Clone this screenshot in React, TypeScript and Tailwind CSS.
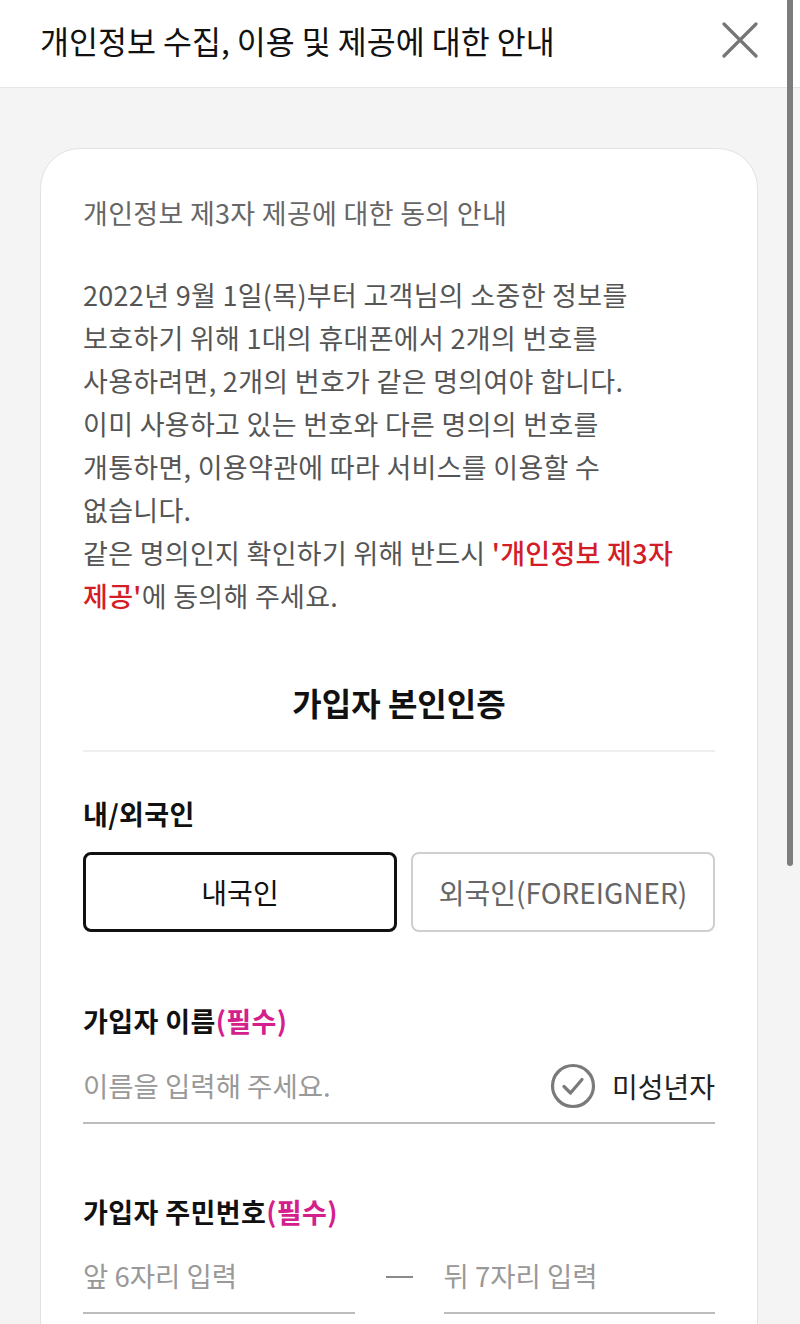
import React from "react";

const font = { fontFamily: '"Noto Sans CJK KR", "Noto Sans", sans-serif' };

const CloseIcon = () => (
  <svg width="36" height="36" viewBox="0 0 36 36" fill="none">
    <path d="M2 2L34 34M34 2L2 34" stroke="#767676" strokeWidth="3.2" strokeLinecap="round" />
  </svg>
);

const CheckCircle = () => (
  <svg width="46" height="46" viewBox="0 0 46 46" fill="none">
    <circle cx="23" cy="23" r="20.5" stroke="#7a7a7a" strokeWidth="3.2" />
    <path d="M14 23.5L20.5 30L32 16.5" stroke="#7a7a7a" strokeWidth="3.2" strokeLinecap="round" strokeLinejoin="round" />
  </svg>
);

const Label = ({ text, required }: { text: string; required?: boolean }) => (
  <p className="text-[27px] leading-[36px] tracking-[0.4px] font-bold text-[#111]">
    {text}
    {required && <span className="text-[#d4208c]">(필수)</span>}
  </p>
);

export default function App() {
  return (
    <div style={font} className="relative min-h-[1324px] bg-[#f4f4f4] overflow-hidden">
      {/* Header */}
      <header className="flex h-[88px] items-center justify-between border-b border-[#e6e6e6] bg-white pl-[40px] pr-[40px] pb-[8px]">
        <h1 className="text-[31.5px] leading-[40px] font-normal text-[#111]">개인정보 수집, 이용 및 제공에 대한 안내</h1>
        <button className="flex h-[40px] w-[40px] items-center justify-center">
          <CloseIcon />
        </button>
      </header>

      {/* Card */}
      <main className="ml-[40px] mr-[42px] mt-[60px] rounded-t-[40px] border border-[#e2e2e2] bg-white px-[42px] pt-[42px] pb-[40px]">
        <p className="text-[27px] leading-[43px] tracking-[0.3px] text-[#666]">개인정보 제3자 제공에 대한 동의 안내</p>

        <p className="mt-[39px] text-[27px] leading-[43px] tracking-[0.3px] text-[#555]">
          2022년 9월 1일(목)부터 고객님의 소중한 정보를
          <br />
          보호하기 위해 1대의 휴대폰에서 2개의 번호를
          <br />
          사용하려면, 2개의 번호가 같은 명의여야 합니다.
          <br />
          이미 사용하고 있는 번호와 다른 명의의 번호를
          <br />
          개통하면, 이용약관에 따라 서비스를 이용할 수
          <br />
          없습니다.
          <br />
          같은 명의인지 확인하기 위해 반드시 <span className="font-medium text-[#d31d27]">'개인정보 제3자</span>
          <br />
          <span className="font-medium text-[#d31d27]">제공'</span>에 동의해 주세요.
        </p>

        <h2 className="mt-[65px] text-center text-[32px] leading-[40px] font-bold text-[#111]">가입자 본인인증</h2>
        <div className="mt-[28px] h-[2px] bg-[#efefef]" />

        <div className="mt-[44px]">
          <Label text="내/외국인" />
          <div className="mt-[20px] flex gap-[14px]">
            <button className="h-[80px] flex-1 rounded-[8px] border-[3px] border-[#111] bg-white text-[28px] text-[#111]">
              내국인
            </button>
            <button className="h-[80px] w-[304px] rounded-[8px] border-2 border-[#cfcfcf] bg-white text-[28px] text-[#666]">
              외국인(FOREIGNER)
            </button>
          </div>
        </div>

        <div className="mt-[71px]">
          <Label text="가입자 이름" required />
          <div className="mt-[10px] flex h-[75px] items-center border-b-2 border-[#bdbdbd]">
            <span className="flex-1 text-[27.5px] text-[#999]">이름을 입력해 주세요.</span>
            <CheckCircle />
            <span className="ml-[16px] text-[28px] text-[#222]">미성년자</span>
          </div>
        </div>

        <div className="mt-[70px]">
          <Label text="가입자 주민번호" required />
          <div className="mt-[10px] flex h-[74px] items-stretch">
            <div className="flex flex-1 items-center border-b-2 border-[#bdbdbd]">
              <span className="text-[27.5px] text-[#999]">앞 6자리 입력</span>
            </div>
            <div className="flex w-[89px] items-center justify-center">
              <div className="h-[2px] w-[27px] bg-[#8a8a8a]" />
            </div>
            <div className="flex flex-1 items-center border-b-2 border-[#bdbdbd]">
              <span className="text-[27.5px] text-[#999]">뒤 7자리 입력</span>
            </div>
          </div>
        </div>
      </main>

      {/* Overlay scrollbar */}
      <div className="absolute right-[7px] top-0 h-[866px] w-[6px] rounded-b-full bg-[#7d7d7d]" />
    </div>
  );
}
